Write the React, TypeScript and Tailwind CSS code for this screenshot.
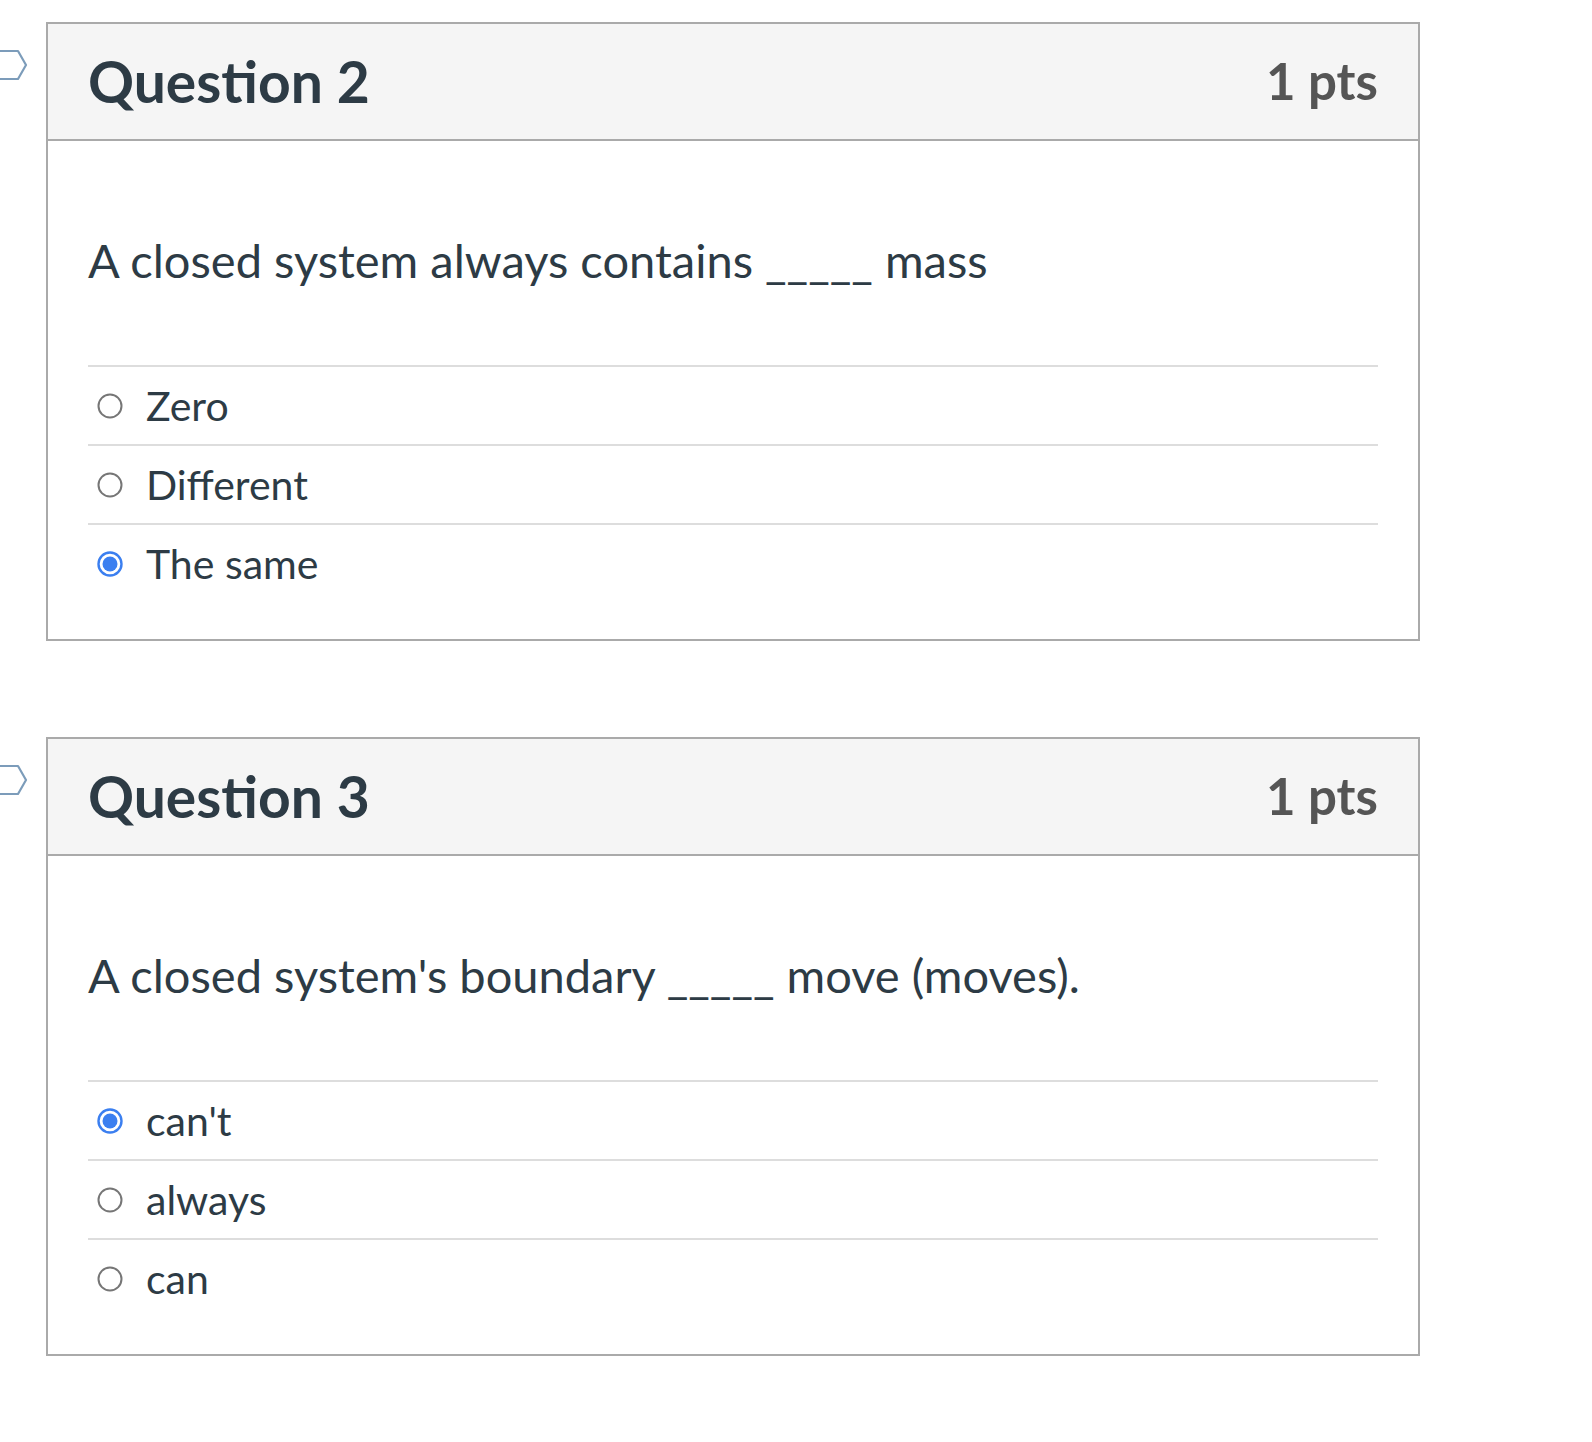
import React from "react";

interface Question {
  title: string;
  text: string;
  answers: string[];
  selected: number;
}

const questions: Question[] = [
  {
    title: "Question 2",
    text: "A closed system always contains _____ mass",
    answers: ["Zero", "Different", "The same"],
    selected: 2,
  },
  {
    title: "Question 3",
    text: "A closed system's boundary _____ move (moves).",
    answers: ["can't", "always", "can"],
    selected: 0,
  },
];

function FlagIcon() {
  return (
    <svg width="28" height="32" viewBox="0 0 28 32" className="block">
      <path d="M-4 2 H18 L26 16 L18 30 H-4" fill="none" stroke="#7c9cba" strokeWidth="2.2" strokeLinejoin="round" />
    </svg>
  );
}

function Radio({ checked }: { checked: boolean }) {
  if (checked) {
    return (
      <svg width="28" height="28" viewBox="0 0 28 28" className="block">
        <circle cx="14" cy="14" r="11.5" fill="#fff" stroke="#3b7ff0" strokeWidth="2.4" />
        <circle cx="14" cy="14" r="7.5" fill="#3b7ff0" />
      </svg>
    );
  }
  return (
    <svg width="28" height="28" viewBox="0 0 28 28" className="block">
      <circle cx="14" cy="14" r="11.5" fill="#fff" stroke="#767676" strokeWidth="2" />
    </svg>
  );
}

function QuestionCard({ q }: { q: Question }) {
  return (
    <div className="flex">
      <div className="w-[46px] shrink-0 pt-[27px]">
        <FlagIcon />
      </div>
      <div className="w-[1374px] shrink-0 border-2 border-[#aaaaaa] bg-white">
        <div className="flex h-[117px] items-center justify-between border-b-2 border-[#aaaaaa] bg-[#f5f5f5] px-10">
          <h2 className="text-[57px] font-bold text-[#2d3b45]">{q.title}</h2>
          <div className="text-[51px] font-bold text-[#555555]">1 pts</div>
        </div>
        <div className="px-10 pb-[37px]">
          <div className="flex h-[224px] items-center pt-[14px] text-[47px] text-[#2d3b45]">{q.text}</div>
          <div>
            {q.answers.map((a, i) => (
              <div key={a} className="flex h-[79px] items-center border-t-2 border-[#dddddd] pl-[8px]">
                <Radio checked={i === q.selected} />
                <span className="ml-[22px] text-[41px] text-[#2d3b45]">{a}</span>
              </div>
            ))}
          </div>
        </div>
      </div>
    </div>
  );
}

export default function App() {
  return (
    <div className="min-h-[1442px] bg-white pt-[22px] font-['Lato','Liberation_Sans',sans-serif]">
      <div className="flex flex-col gap-[96px]">
        {questions.map((q) => (
          <QuestionCard key={q.title} q={q} />
        ))}
      </div>
    </div>
  );
}
